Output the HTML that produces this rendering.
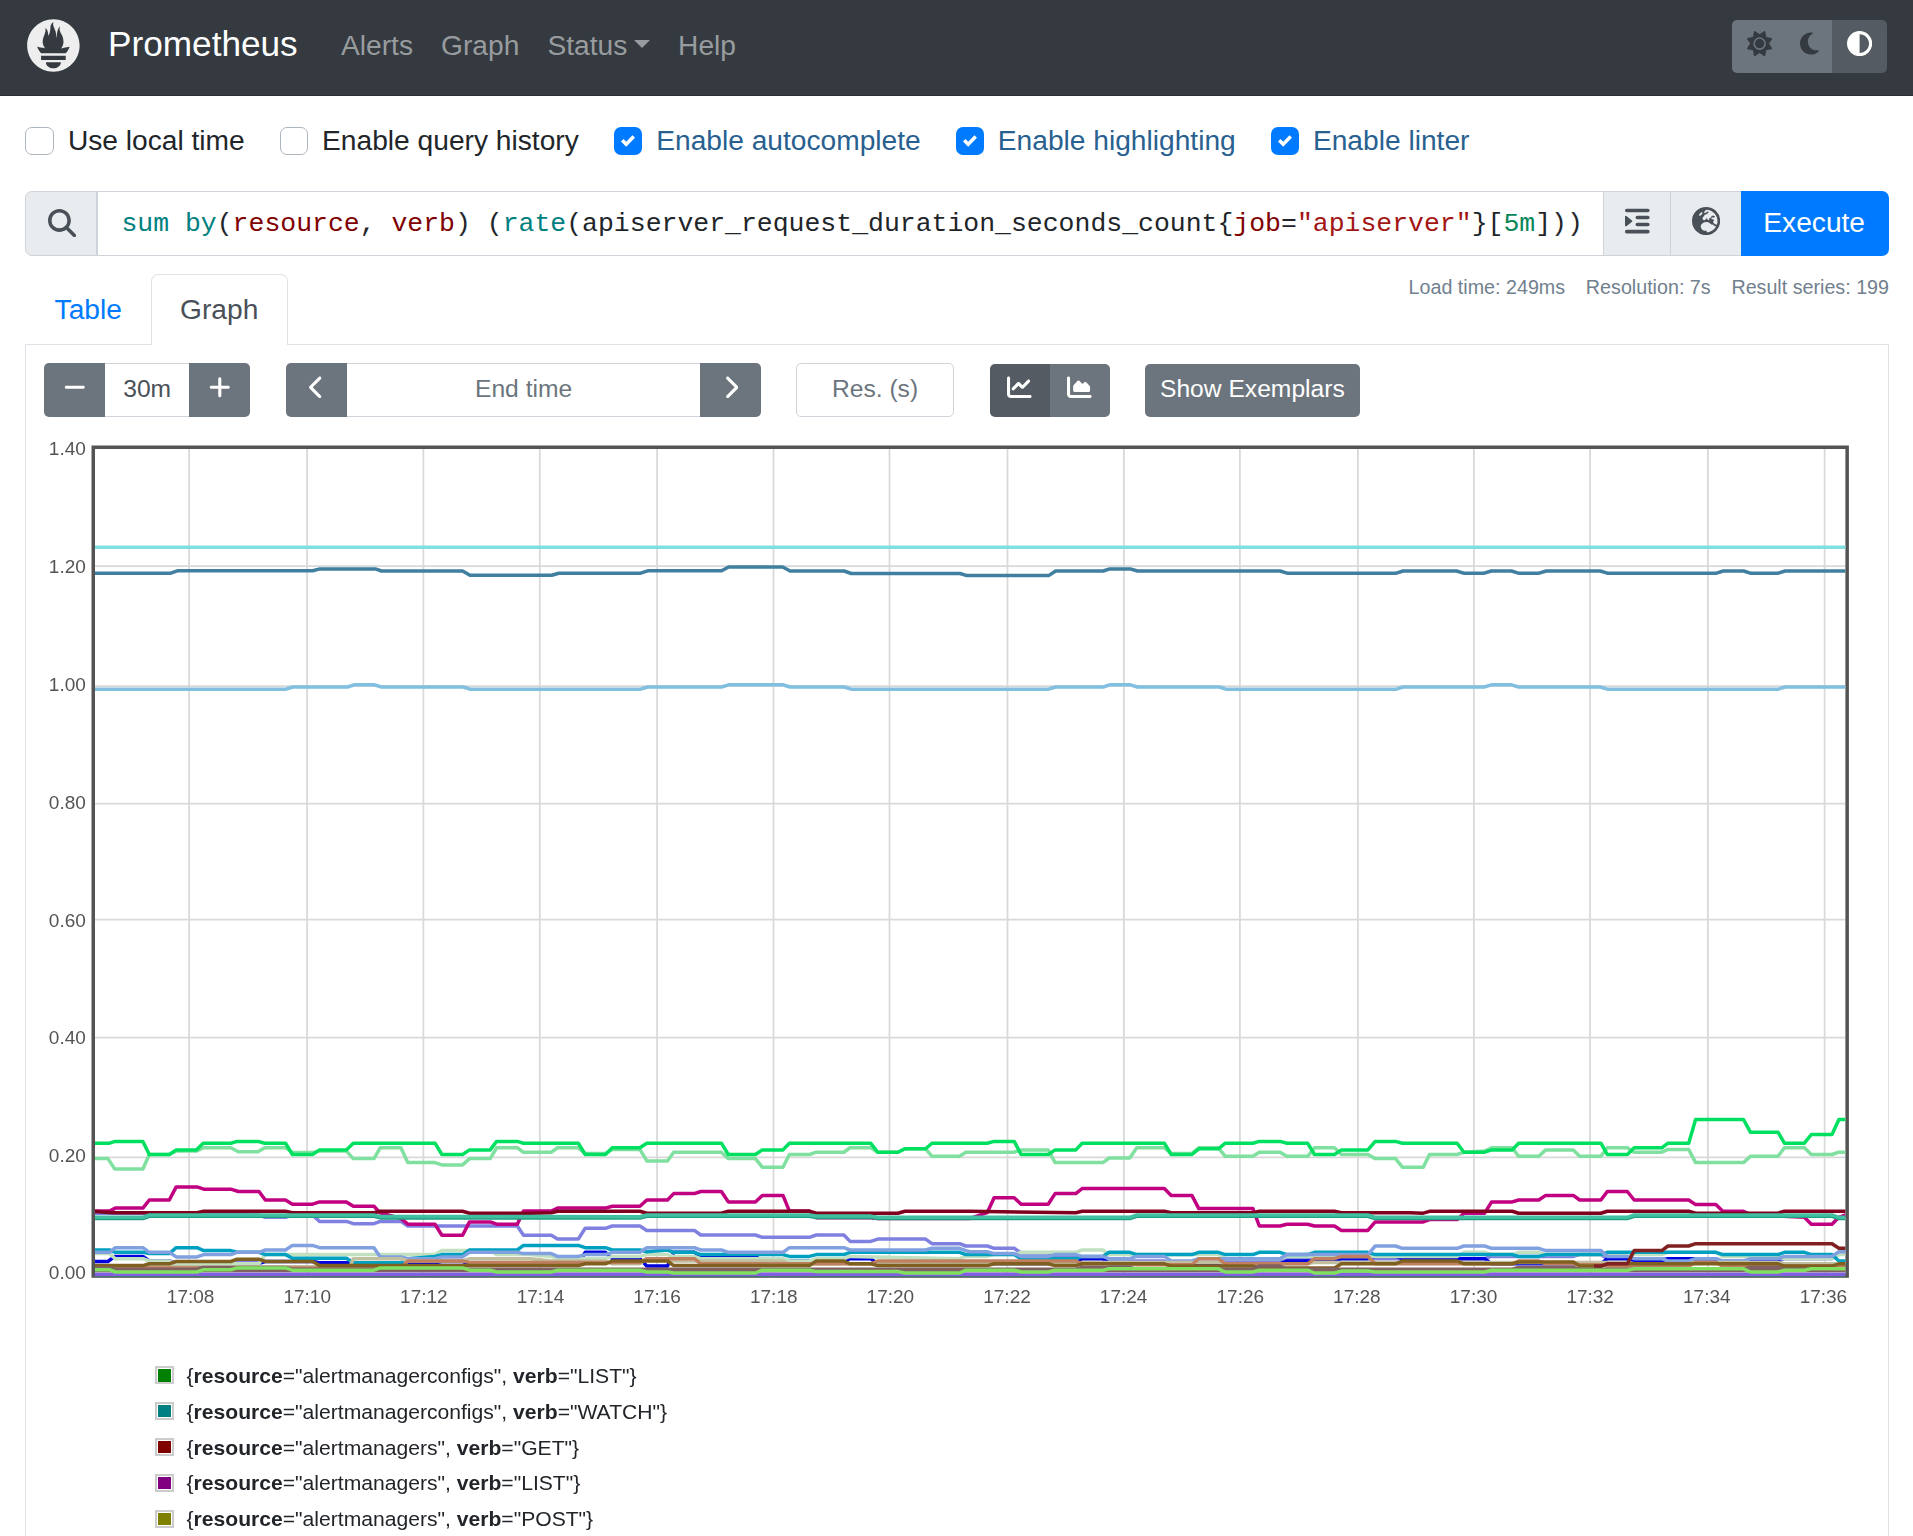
<!DOCTYPE html>
<html><head><meta charset="utf-8"><title>Prometheus Time Series Collection and Processing Server</title>
<style>
html,body{margin:0;padding:0;background:#fff}
body{width:1913px;height:1536px;overflow:hidden;position:relative;font-family:"Liberation Sans", sans-serif;color:#212529}
.a{position:absolute;box-sizing:border-box}
.t{position:absolute;white-space:pre;line-height:1}
.mono{font-family:"Liberation Mono", monospace}
b{font-weight:700}
</style></head><body>

<div class="a" style="left:0.00px;top:0.00px;width:1913.00px;height:96.00px;background:#343a40"></div>
<div class="a" style="left:0.00px;top:95.00px;width:1913.00px;height:1.00px;background:#2a2e35"></div>
<svg class="a" style="left:27.00px;top:19.10px" width="52.80" height="52.80" viewBox="0 0.3 113.333 114"><path fill="#eeeeee" d="M56.667,0.667C25.372,0.667,0,26.036,0,57.332c0,31.295,25.372,56.666,56.667,56.666s56.666-25.371,56.666-56.666C113.333,26.036,87.961,0.667,56.667,0.667z M56.667,106.722c-8.904,0-16.123-5.948-16.123-13.283H72.79C72.79,100.773,65.571,106.722,56.667,106.722z M83.297,89.04H30.034v-9.658h53.264V89.04z M83.106,74.411H30.186c-0.176-0.203-0.356-0.403-0.526-0.609c-5.452-6.62-6.736-10.076-7.983-13.598c-0.021-0.116,6.611,1.355,11.314,2.413c0,0,2.42,0.56,5.958,1.205c-3.397-3.982-5.414-9.044-5.414-14.218c0-11.359,8.712-21.285,5.569-29.308c3.059,0.249,6.331,6.456,6.552,16.161c3.252-4.494,4.613-12.701,4.613-17.733c0-5.21,3.433-11.262,6.867-11.469c-3.061,5.045,0.793,9.37,4.219,20.099c1.285,4.03,1.121,10.812,2.113,15.113C63.797,33.534,65.333,20.5,71,16c-2.5,5.667,0.37,12.758,2.333,16.167c3.167,5.5,5.087,9.667,5.087,17.548c0,5.284-1.951,10.259-5.242,14.148c3.742-0.702,6.326-1.335,6.326-1.335l12.152-2.371C91.657,60.156,89.891,67.418,83.106,74.411z"/></svg>
<div class="t " style="left:108.00px;top:26.30px;font-size:35.20px;color:#ffffff;">Prometheus</div>
<div class="t " style="left:341.00px;top:32.26px;font-size:28.16px;color:#999c9f;">Alerts</div>
<div class="t " style="left:441.10px;top:32.26px;font-size:28.16px;color:#999c9f;">Graph</div>
<div class="t " style="left:547.50px;top:32.26px;font-size:28.16px;color:#999c9f;">Status</div>
<div class="a" style="left:633.8px;top:39.7px;width:0;height:0;border-top:8.4px solid #999c9f;border-left:8.4px solid transparent;border-right:8.4px solid transparent"></div>
<div class="t " style="left:678.10px;top:32.26px;font-size:28.16px;color:#999c9f;">Help</div>
<div class="a" style="left:1732.00px;top:20.00px;width:101.00px;height:53.00px;background:#6c757d;border-radius:5px 0 0 5px"></div>
<div class="a" style="left:1832.00px;top:20.00px;width:55.00px;height:53.00px;background:#545b62;border-radius:0 5px 5px 0"></div>
<svg class="a" style="left:1746.90px;top:30.90px" width="25.20" height="25.20" viewBox="0 0 512 512"><path fill="#343a40" d="M361.500 1.200c5 2.100 8.600 6.600 9.600 11.900L391 121l107.900 19.800c5.300 1 9.800 4.600 11.900 9.600s1.500 10.700-1.600 15.200L446.900 256l62.300 90.300c3.100 4.500 3.700 10.200 1.600 15.200s-6.600 8.600-11.900 9.600L391 391 371.100 498.900c-1 5.300-4.600 9.800-9.600 11.900s-10.700 1.500-15.200-1.600L256 446.900l-90.300 62.300c-4.500 3.100-10.200 3.700-15.200 1.600s-8.600-6.600-9.600-11.900L121 391 13.100 371.100c-5.300-1-9.800-4.600-11.900-9.600s-1.500-10.700 1.600-15.200L65.100 256 2.800 165.700c-3.100-4.500-3.700-10.200-1.600-15.200s6.600-8.600 11.900-9.600L121 121 140.900 13.100c1-5.300 4.600-9.800 9.600-11.900s10.700-1.500 15.200 1.600L256 65.100 346.300 2.800c4.500-3.100 10.200-3.700 15.200-1.600zM160 256a96 96 0 1 1 192 0 96 96 0 1 1 -192 0zm224 0a128 128 0 1 0 -256 0 128 128 0 1 0 256 0z"/></svg>
<svg class="a" style="left:1800.20px;top:30.80px" width="18.90" height="25.20" viewBox="0 0 384 512"><path fill="#343a40" d="M223.500 32C100 32 0 132.300 0 256S100 480 223.500 480c60.600 0 115.500-24.200 155.800-63.400c5-4.900 6.300-12.500 3.100-18.700s-10.100-9.700-17-8.500c-9.800 1.700-19.800 2.600-30.100 2.600c-96.900 0-175.500-78.800-175.500-176c0-65.800 36-123.100 89.300-153.300c6.100-3.500 9.200-10.500 7.700-17.300s-7.300-11.900-14.300-12.500c-6.300-.5-12.600-.8-19-.8z"/></svg>
<svg class="a" style="left:1846.90px;top:30.80px" width="25.20" height="25.20" viewBox="0 0 512 512"><path fill="#ffffff" d="M448 256c0-106-86-192-192-192V448c106 0 192-86 192-192zM0 256a256 256 0 1 1 512 0A256 256 0 1 1 0 256z"/></svg>
<div class="a" style="left:25.00px;top:127.00px;width:29.00px;height:28.00px;background:#fff;border:1px solid #adb5bd;border-radius:7px"></div>
<div class="t " style="left:67.90px;top:126.76px;font-size:28.16px;color:#212529;">Use local time</div>
<div class="a" style="left:280.00px;top:127.00px;width:28.00px;height:28.00px;background:#fff;border:1px solid #adb5bd;border-radius:7px"></div>
<div class="t " style="left:322.10px;top:126.76px;font-size:28.16px;color:#212529;">Enable query history</div>
<div class="a" style="left:614.00px;top:127.00px;width:28.00px;height:28.00px;background:#007bff;border-radius:7px"></div>
<svg class="a" style="left:621.00px;top:134.00px" width="14.00" height="14.00" viewBox="0 0 8 8"><path fill="#fff" d="M6.564.75l-3.590 3.612-1.538-1.550L0 4.260l2.974 2.990L8 2.193z"/></svg>
<div class="t " style="left:656.20px;top:126.76px;font-size:28.16px;color:#286090;">Enable autocomplete</div>
<div class="a" style="left:955.60px;top:127.00px;width:28.00px;height:28.00px;background:#007bff;border-radius:7px"></div>
<svg class="a" style="left:962.60px;top:134.00px" width="14.00" height="14.00" viewBox="0 0 8 8"><path fill="#fff" d="M6.564.75l-3.590 3.612-1.538-1.550L0 4.260l2.974 2.990L8 2.193z"/></svg>
<div class="t " style="left:997.80px;top:126.76px;font-size:28.16px;color:#286090;">Enable highlighting</div>
<div class="a" style="left:1271.00px;top:127.00px;width:28.00px;height:28.00px;background:#007bff;border-radius:7px"></div>
<svg class="a" style="left:1278.00px;top:134.00px" width="14.00" height="14.00" viewBox="0 0 8 8"><path fill="#fff" d="M6.564.75l-3.590 3.612-1.538-1.550L0 4.260l2.974 2.990L8 2.193z"/></svg>
<div class="t " style="left:1312.90px;top:126.76px;font-size:28.16px;color:#286090;">Enable linter</div>
<div class="a" style="left:25.00px;top:191.00px;width:72.00px;height:65.00px;background:#e9ecef;border:1px solid #ced4da;border-radius:7px 0 0 7px"></div>
<div class="a" style="left:96.00px;top:191.00px;width:1508.00px;height:65.00px;background:#fff;border:1px solid #ced4da;border-left-width:2px"></div>
<div class="a" style="left:1603.00px;top:191.00px;width:68.00px;height:65.00px;background:#e9ecef;border:1px solid #ced4da"></div>
<div class="a" style="left:1670.00px;top:191.00px;width:72.00px;height:65.00px;background:#e9ecef;border:1px solid #ced4da"></div>
<div class="a" style="left:1741.00px;top:191.00px;width:148.00px;height:65.00px;background:#007bff;border-radius:0 7px 7px 0"></div>
<div class="t " style="left:1763.30px;top:208.76px;font-size:28.16px;color:#fff;">Execute</div>
<svg class="a" style="left:48.20px;top:208.90px" width="28.16" height="28.16" viewBox="0 0 512 512"><path fill="#495057" d="M416 208c0 45.900-14.900 88.300-40 122.700L502.600 457.400c12.500 12.500 12.500 32.800 0 45.300s-32.800 12.500-45.300 0L330.700 376c-34.400 25.200-76.800 40-122.700 40C93.100 416 0 322.900 0 208S93.100 0 208 0S416 93.100 416 208zM208 352a144 144 0 1 0 0-288 144 144 0 1 0 0 288z"/></svg>
<svg class="a" style="left:1625.10px;top:207.40px" width="24.64" height="28.16" viewBox="0 0 448 512"><path fill="#495057" d="M0 64C0 46.300 14.300 32 32 32H416c17.700 0 32 14.300 32 32s-14.300 32-32 32H32C14.300 96 0 81.700 0 64zM192 192c0-17.700 14.300-32 32-32H416c17.700 0 32 14.300 32 32s-14.300 32-32 32H224c-17.700 0-32-14.300-32-32zm32 96H416c17.700 0 32 14.300 32 32s-14.300 32-32 32H224c-17.700 0-32-14.300-32-32s14.300-32 32-32zM0 448c0-17.700 14.300-32 32-32H416c17.700 0 32 14.300 32 32s-14.300 32-32 32H32c-17.700 0-32-14.300-32-32zM127.800 268.600L25.800 347.900C15.300 356.100 0 348.600 0 335.300V176.700c0-13.300 15.300-20.800 25.800-12.600l101.900 79.300c8.200 6.400 8.200 18.900 0 25.300z"/></svg>
<svg class="a" style="left:1691.90px;top:207.30px" width="28.16" height="28.16" viewBox="0 0 512 512"><path fill="#495057" d="M266.300 48.300L232.500 73.600c-5.400 4-8.500 10.400-8.500 17.100v9.100c0 6.800 5.500 12.300 12.300 12.300c2.400 0 4.800-.7 6.800-2.100l41.800-27.900c2-1.300 4.400-2.100 6.800-2.100h1c6.200 0 11.300 5.100 11.300 11.300c0 3-1.200 5.900-3.300 8l-19.900 19.900c-5.800 5.800-12.900 10.200-20.700 12.800l-26.500 8.800c-5.800 1.900-9.600 7.300-9.600 13.400c0 3.700-1.500 7.300-4.100 10l-17.900 17.900c-6.400 6.400-9.900 15-9.900 24v4.300c0 16.400 13.600 29.700 29.900 29.700c11 0 21.200-6.200 26.100-16l4-8.100c2.400-4.800 7.400-7.900 12.800-7.900c4.500 0 8.700 2.100 11.400 5.700l16.300 21.700c2.100 2.900 5.500 4.500 9.100 4.500c8.400 0 13.900-8.900 10.100-16.400l-1.100-2.300c-3.500-7 0-15.500 7.500-18l21.200-7.100c7.600-2.500 12.700-9.600 12.700-17.600c0-10.300 8.300-18.600 18.600-18.600H400c8.800 0 16 7.200 16 16s-7.200 16-16 16H379.300c-7.200 0-14.200 2.900-19.300 8l-4.700 4.700c-2.100 2.100-3.300 5-3.300 8c0 6.200 5.100 11.300 11.300 11.300h11.300c6 0 11.800 2.400 16 6.600l6.500 6.500c1.800 1.800 2.800 4.300 2.800 6.800s-1 5-2.800 6.800l-7.500 7.500C386 262 384 266.900 384 272s2 10 5.700 13.700L408 304c10.200 10.200 24.100 16 38.600 16H454c6.500-20.200 10-41.700 10-64c0-111.400-87.600-202.400-197.700-207.700zm172 307.900c-3.700-2.600-8.200-4.100-13-4.100c-6 0-11.800-2.400-16-6.600L396 332c-7.700-7.700-18-12-28.900-12c-9.700 0-19.200-3.500-26.600-9.800L314 287.400c-11.600-9.900-26.400-15.400-41.700-15.400H251.400c-12.600 0-25 3.700-35.500 10.700L188.500 301c-17.800 11.900-28.500 31.900-28.500 53.300v3.200c0 17 6.700 33.300 18.700 45.300l16 16c8.500 8.500 20 13.300 32 13.300H248c13.300 0 24 10.700 24 24c0 2.500 .4 5 1.100 7.300c71.300-5.700 132.500-47.600 165.200-107.200zM0 256a256 256 0 1 1 512 0A256 256 0 1 1 0 256zM187.300 100.700c-6.200-6.200-16.400-6.200-22.600 0l-32 32c-6.200 6.200-6.200 16.400 0 22.600s16.400 6.200 22.600 0l32-32c6.200-6.200 6.200-16.400 0-22.600z"/></svg>
<div class="t mono" id="q" style="left:121.4px;top:211.38px;font-size:26.485px;color:#212529"><span style="color:#008080">sum</span> <span style="color:#008080">by</span>(<span style="color:#800000">resource</span>, <span style="color:#800000">verb</span>) (<span style="color:#008080">rate</span>(apiserver_request_duration_seconds_count{<span style="color:#800000">job</span>=<span style="color:#a31515">"apiserver"</span>}[<span style="color:#098658">5m</span>]))</div>
<div class="t " style="right:24.00px;top:277.92px;font-size:19.71px;color:#71808e;">Load time: 249ms &ensp; Resolution: 7s &ensp; Result series: 199</div>
<div class="a" style="left:25.00px;top:344.00px;width:1864.00px;height:1256.00px;border:1px solid #dee2e6;border-bottom:0"></div>
<div class="a" style="left:151.00px;top:274.00px;width:137.00px;height:71.30px;background:#fff;border:1px solid #dee2e6;border-bottom:0;border-radius:7px 7px 0 0"></div>
<div class="t " style="left:54.60px;top:295.96px;font-size:28.16px;color:#007bff;">Table</div>
<div class="t " style="left:180.10px;top:295.96px;font-size:28.16px;color:#495057;">Graph</div>
<div class="a" style="left:44.20px;top:363.00px;width:60.80px;height:53.70px;background:#6c757d;border-radius:5px 0 0 5px"></div>
<div class="a" style="left:104.70px;top:363.00px;width:84.60px;height:53.70px;background:#fff;border-top:1px solid #ced4da;border-bottom:1px solid #ced4da"></div>
<div class="a" style="left:189.00px;top:363.00px;width:61.00px;height:53.70px;background:#6c757d;border-radius:0 5px 5px 0"></div>
<div class="t " style="left:147.20px;transform:translateX(-50%);top:376.94px;font-size:24.64px;color:#495057;">30m</div>
<div class="a" style="left:286.00px;top:363.00px;width:61.00px;height:53.70px;background:#6c757d;border-radius:5px 0 0 5px"></div>
<div class="a" style="left:346.70px;top:363.00px;width:354.00px;height:53.70px;background:#fff;border-top:1px solid #ced4da;border-bottom:1px solid #ced4da"></div>
<div class="a" style="left:700.40px;top:363.00px;width:60.40px;height:53.70px;background:#6c757d;border-radius:0 5px 5px 0"></div>
<div class="t " style="left:523.60px;transform:translateX(-50%);top:376.94px;font-size:24.64px;color:#6c757d;">End time</div>
<div class="a" style="left:796.10px;top:363.00px;width:157.80px;height:53.70px;background:#fff;border:1px solid #ced4da;border-radius:5px"></div>
<div class="t " style="left:875.00px;transform:translateX(-50%);top:376.94px;font-size:24.64px;color:#6c757d;">Res. (s)</div>
<div class="a" style="left:990.00px;top:363.80px;width:60.50px;height:52.90px;background:#545b62;border-radius:5px 0 0 5px"></div>
<div class="a" style="left:1050.00px;top:363.80px;width:60.00px;height:52.90px;background:#6c757d;border-radius:0 5px 5px 0"></div>
<div class="a" style="left:1145.00px;top:363.80px;width:215.00px;height:52.90px;background:#6c757d;border-radius:5px"></div>
<div class="t " style="left:1160.00px;top:377.34px;font-size:24.64px;color:#fff;">Show Exemplars</div>
<svg class="a" style="left:63.70px;top:374.70px" width="21.56" height="24.64" viewBox="0 0 448 512"><path fill="#fff" d="M432 256c0 17.700-14.300 32-32 32L48 288c-17.700 0-32-14.300-32-32s14.300-32 32-32l352 0c17.700 0 32 14.300 32 32z"/></svg>
<svg class="a" style="left:208.70px;top:374.70px" width="21.56" height="24.64" viewBox="0 0 448 512"><path fill="#fff" d="M256 80c0-17.700-14.300-32-32-32s-32 14.300-32 32V224H48c-17.700 0-32 14.300-32 32s14.300 32 32 32H192V432c0 17.700 14.300 32 32 32s32-14.300 32-32V288H400c17.700 0 32-14.300 32-32s-14.300-32-32-32H256V80z"/></svg>
<svg class="a" style="left:308.80px;top:374.70px" width="15.40" height="24.64" viewBox="0 0 320 512"><path fill="#fff" d="M9.400 233.400c-12.500 12.500-12.500 32.800 0 45.300l192 192c12.500 12.500 32.800 12.500 45.300 0s12.500-32.800 0-45.300L77.300 256 246.600 86.600c12.500-12.500 12.500-32.800 0-45.300s-32.800-12.500-45.300 0l-192 192z"/></svg>
<svg class="a" style="left:722.90px;top:374.70px" width="15.40" height="24.64" viewBox="0 0 320 512"><path fill="#fff" d="M310.600 233.400c12.500 12.500 12.500 32.800 0 45.300l-192 192c-12.500 12.500-32.800 12.500-45.300 0s-12.500-32.800 0-45.300L242.700 256 73.400 86.600c-12.500-12.500-12.500-32.800 0-45.300s32.800-12.500 45.300 0l192 192z"/></svg>
<svg class="a" style="left:1007.40px;top:374.90px" width="24.64" height="24.64" viewBox="0 0 512 512"><path fill="#fff" d="M64 64c0-17.700-14.300-32-32-32S0 46.300 0 64V400c0 44.200 35.800 80 80 80H480c17.700 0 32-14.300 32-32s-14.300-32-32-32H80c-8.800 0-16-7.200-16-16V64zm406.600 86.600c12.500-12.500 12.500-32.800 0-45.300s-32.800-12.500-45.300 0L320 210.700l-57.400-57.400c-12.500-12.500-32.800-12.500-45.300 0l-112 112c-12.500 12.500-12.500 32.800 0 45.300s32.800 12.500 45.300 0L240 221.300l57.400 57.400c12.500 12.500 32.800 12.500 45.300 0l128-128z"/></svg>
<svg class="a" style="left:1067.10px;top:374.90px" width="24.64" height="24.64" viewBox="0 0 512 512"><path fill="#fff" d="M64 64c0-17.700-14.300-32-32-32S0 46.300 0 64V400c0 44.200 35.800 80 80 80H480c17.700 0 32-14.300 32-32s-14.300-32-32-32H80c-8.800 0-16-7.200-16-16V64zm96 288H448c17.700 0 32-14.300 32-32V251.800c0-7.600-2.700-15-7.700-20.800l-65.800-76.800c-12.100-14.200-33.700-15-46.900-1.800l-21 21c-10 10-26.400 9.200-35.400-1.600l-39.200-47c-12.600-15.100-35.700-15.400-48.700-.6L135.900 215c-5.100 5.800-7.900 13.300-7.900 21.100v84c0 17.700 14.300 32 32 32z"/></svg>
<svg class="a" style="left:0;top:430px" width="1913" height="860" viewBox="0 430 1913 860">
<path d="M95.0 566.00 H1845.4 M95.0 686.00 H1845.4 M95.0 803.60 H1845.4 M95.0 919.60 H1845.4 M95.0 1037.70 H1845.4 M95.0 1157.40 H1845.4 M189.10 449.0 V1274.3 M307.10 449.0 V1274.3 M423.40 449.0 V1274.3 M539.80 449.0 V1274.3 M657.10 449.0 V1274.3 M773.50 449.0 V1274.3 M889.50 449.0 V1274.3 M1007.50 449.0 V1274.3 M1123.90 449.0 V1274.3 M1239.90 449.0 V1274.3 M1357.90 449.0 V1274.3 M1473.90 449.0 V1274.3 M1590.00 449.0 V1274.3 M1707.90 449.0 V1274.3 M1824.60 449.0 V1274.3" stroke="#d9d9d9" stroke-width="1.75" fill="none"/>
<rect x="93.25" y="447.25" width="1753.90" height="828.80" fill="none" stroke="#545454" stroke-width="3.5"/>
<g fill="none" stroke-width="3.5" stroke-linejoin="round" stroke-linecap="butt">
<path stroke="#408080" d="M95.0 1274.9 H1845.4"/>
<path stroke="#8060e0" d="M95.0 1274.3 H1845.4"/>
<path stroke="#80e0e0" d="M95.0 547.2 L1845.4 547.2"/>
<path stroke="#80bfe0" d="M95.0 689.2 L285.9 689.2 L293.0 687.0 L347.6 687.0 L354.3 684.8 L374.4 684.8 L381.5 687.0 L463.2 687.0 L470.0 689.2 L640.6 689.2 L647.7 687.0 L721.6 687.0 L728.7 684.8 L782.7 684.8 L790.1 687.0 L844.1 687.0 L851.2 689.2 L1048.6 689.2 L1055.7 687.0 L1103.2 687.0 L1109.7 684.8 L1130.3 684.8 L1137.4 687.0 L1219.2 687.0 L1226.0 689.2 L1396.3 689.2 L1403.1 687.0 L1484.2 687.0 L1491.3 684.8 L1511.4 684.8 L1518.5 687.0 L1600.2 687.0 L1607.3 689.2 L1778.2 689.2 L1785.0 687.0 L1845.4 687.0"/>
<path stroke="#407fa0" d="M95.0 573.2 L170.8 573.2 L178.0 570.7 L312.7 570.7 L319.8 568.9 L375.3 568.9 L381.5 571.0 L462.6 571.0 L470.0 575.3 L551.7 575.3 L558.8 573.2 L640.6 573.2 L647.7 570.8 L721.6 570.8 L728.7 567.0 L782.7 567.0 L790.1 571.0 L844.1 571.0 L851.2 573.5 L960.0 573.5 L966.9 575.6 L1048.6 575.6 L1055.7 571.0 L1103.2 571.0 L1109.7 568.9 L1130.3 568.9 L1137.4 571.0 L1280.0 571.0 L1287.1 573.2 L1396.3 573.2 L1403.1 571.0 L1456.5 571.0 L1463.6 573.2 L1484.2 573.2 L1491.3 571.0 L1511.4 571.0 L1518.5 573.2 L1539.1 573.2 L1546.2 571.0 L1600.2 571.0 L1607.3 573.2 L1716.5 573.2 L1723.3 571.0 L1743.6 571.0 L1750.4 573.2 L1778.2 573.2 L1785.0 571.0 L1845.4 571.0"/>
<path stroke="#80e0a0" d="M95.0 1158.6 L107.9 1158.6 L114.8 1169.0 L142.9 1169.0 L149.3 1154.5 L169.3 1154.5 L176.2 1151.1 L196.3 1151.1 L203.2 1147.8 L230.8 1147.8 L238.3 1151.7 L257.9 1151.7 L264.8 1147.8 L285.5 1147.8 L292.4 1152.4 L312.6 1152.4 L319.5 1151.1 L346.4 1151.1 L353.3 1158.6 L374.0 1158.6 L380.2 1147.8 L400.9 1147.8 L407.8 1162.6 L435.0 1162.6 L441.9 1164.9 L462.6 1164.9 L469.5 1158.6 L490.2 1158.6 L496.6 1147.8 L517.3 1147.8 L523.5 1152.2 L530.0 1152.2 L551.2 1152.2 L557.6 1147.8 L578.3 1147.8 L585.2 1153.4 L605.4 1153.4 L612.3 1149.4 L639.9 1149.4 L646.8 1160.9 L667.5 1160.9 L673.7 1152.2 L721.4 1152.2 L728.3 1158.6 L755.4 1158.6 L762.3 1167.2 L783.0 1167.2 L789.4 1154.5 L809.4 1154.5 L816.3 1152.2 L843.9 1152.2 L850.1 1147.8 L870.8 1147.8 L877.7 1152.2 L898.0 1152.2 L904.9 1148.8 L925.6 1148.8 L932.0 1156.3 L959.6 1156.3 L965.8 1152.2 L970.0 1152.2 L1014.2 1152.2 L1021.1 1149.9 L1048.2 1149.9 L1055.1 1162.6 L1102.9 1162.6 L1109.1 1158.0 L1129.8 1158.0 L1136.7 1147.8 L1164.3 1147.8 L1171.2 1153.4 L1191.9 1153.4 L1198.8 1147.8 L1218.4 1147.8 L1225.3 1156.3 L1252.9 1156.3 L1259.3 1152.2 L1280.0 1152.2 L1286.9 1156.3 L1307.6 1156.3 L1314.5 1147.8 L1334.5 1147.8 L1341.4 1154.5 L1367.9 1154.5 L1375.2 1158.6 L1395.5 1158.6 L1402.4 1167.2 L1410.0 1167.2 L1423.3 1167.2 L1429.5 1154.5 L1457.1 1154.5 L1464.0 1152.2 L1484.7 1151.1 L1491.6 1147.8 L1512.3 1147.8 L1518.6 1156.3 L1538.8 1156.3 L1545.7 1149.9 L1573.3 1149.9 L1579.7 1156.3 L1600.9 1156.3 L1607.3 1147.8 L1627.3 1147.8 L1634.2 1152.2 L1661.8 1152.2 L1668.0 1149.4 L1688.7 1149.4 L1695.6 1162.6 L1743.5 1162.6 L1750.4 1156.3 L1778.0 1156.3 L1784.4 1147.8 L1804.4 1147.8 L1811.3 1154.5 L1832.0 1154.5 L1838.9 1152.2 L1845.4 1152.2 L1845.4 1152.2"/>
<path stroke="#00e060" d="M95.0 1143.2 L109.5 1143.2 L115.3 1141.4 L142.9 1141.4 L149.3 1154.5 L169.3 1154.5 L176.2 1149.9 L196.3 1149.9 L203.2 1143.2 L230.8 1143.2 L237.2 1141.4 L257.9 1141.4 L264.8 1143.2 L285.5 1143.2 L292.4 1154.5 L312.6 1154.5 L319.5 1149.9 L346.4 1149.9 L353.3 1143.2 L435.0 1143.2 L441.9 1154.5 L462.6 1154.5 L469.5 1149.9 L490.2 1149.9 L496.6 1141.4 L517.3 1141.4 L523.5 1143.2 L530.0 1143.2 L578.3 1143.2 L585.2 1154.5 L605.4 1154.5 L612.3 1147.8 L639.9 1147.8 L646.8 1143.2 L721.4 1143.2 L728.3 1154.5 L755.4 1154.5 L762.3 1149.9 L783.0 1149.9 L789.4 1143.2 L870.8 1143.2 L877.7 1152.2 L898.0 1152.2 L904.9 1148.8 L925.6 1148.8 L932.0 1143.2 L970.0 1143.2 L987.2 1143.2 L994.1 1141.4 L1014.2 1141.4 L1021.1 1154.5 L1048.2 1154.5 L1055.1 1149.9 L1075.8 1149.9 L1082.2 1143.2 L1164.3 1143.2 L1171.2 1154.5 L1191.9 1154.5 L1198.8 1148.8 L1218.4 1148.8 L1225.3 1143.2 L1252.9 1143.2 L1259.3 1141.4 L1280.0 1141.4 L1286.9 1143.2 L1307.6 1143.2 L1314.5 1154.5 L1334.5 1154.5 L1341.4 1149.9 L1367.9 1149.9 L1375.2 1141.4 L1395.5 1141.4 L1402.4 1143.2 L1410.0 1143.2 L1457.1 1143.2 L1464.0 1152.2 L1484.7 1152.2 L1491.6 1149.9 L1512.3 1149.9 L1518.6 1143.2 L1600.9 1143.2 L1607.3 1154.5 L1627.3 1154.5 L1634.2 1147.8 L1661.8 1147.8 L1668.0 1143.2 L1688.7 1143.2 L1695.6 1119.5 L1743.5 1119.5 L1750.4 1132.2 L1778.0 1132.2 L1784.4 1143.2 L1804.4 1143.2 L1811.3 1134.5 L1832.0 1134.5 L1838.9 1119.5 L1845.4 1119.5 L1845.4 1119.5"/>
<path stroke="#8080e0" d="M95.0 1213.2 L169.3 1213.2 L259.0 1215.0 L265.3 1217.3 L285.5 1217.3 L292.4 1215.0 L312.6 1215.0 L319.5 1221.4 L346.4 1221.4 L353.3 1223.7 L374.0 1223.7 L380.2 1221.4 L400.9 1221.4 L407.8 1226.0 L517.3 1226.0 L523.5 1235.2 L530.0 1235.2 L551.2 1235.2 L557.6 1239.1 L578.3 1239.1 L585.2 1228.3 L605.4 1228.3 L612.3 1226.0 L639.9 1226.0 L646.8 1230.4 L694.4 1230.4 L700.7 1235.0 L755.4 1235.0 L762.3 1237.3 L809.4 1237.3 L816.3 1235.0 L843.9 1235.0 L850.1 1241.4 L870.8 1241.4 L877.7 1239.1 L925.6 1239.1 L932.0 1243.7 L959.6 1243.7 L965.8 1246.0 L970.0 1246.0 L987.2 1246.0 L994.1 1248.3 L1014.2 1248.3 L1021.1 1252.9 L1048.2 1252.9 L1055.1 1256.4 L1075.8 1256.4 L1082.2 1258.7 L1102.9 1258.7 L1109.1 1261.0 L1164.3 1261.0 L1171.2 1263.8 L1218.4 1263.8 L1225.3 1261.0 L1280.0 1261.0 L1286.9 1258.7 L1410.0 1258.7 L1484.7 1258.7 L1491.6 1256.4 L1573.3 1256.4 L1579.7 1254.6 L1600.9 1254.6 L1607.3 1258.7 L1688.7 1258.7 L1695.6 1261.0 L1778.0 1261.0 L1784.4 1258.7 L1832.0 1258.7 L1838.9 1253.6 L1845.4 1253.6 L1845.4 1253.6"/>
<path stroke="#c00080" d="M95.0 1211.1 L109.5 1211.1 L115.3 1208.1 L142.9 1208.1 L149.3 1200.0 L169.3 1200.0 L176.2 1186.9 L196.9 1186.9 L203.8 1189.2 L230.8 1189.2 L238.3 1191.5 L259.0 1191.5 L265.3 1200.0 L285.5 1200.0 L292.4 1204.2 L312.6 1204.2 L319.5 1201.9 L346.4 1201.9 L353.3 1206.3 L374.0 1206.3 L379.8 1212.7 L400.9 1218.4 L407.8 1224.2 L435.0 1224.2 L441.9 1235.2 L462.6 1235.2 L469.5 1221.9 L490.2 1221.9 L496.6 1224.2 L517.3 1224.2 L523.5 1211.1 L530.0 1211.1 L551.2 1211.1 L557.6 1208.1 L605.4 1208.1 L612.3 1206.3 L639.9 1206.3 L646.8 1200.0 L667.5 1200.0 L673.7 1193.6 L694.4 1193.6 L700.7 1191.5 L721.4 1191.5 L728.3 1201.9 L755.4 1201.9 L762.3 1195.4 L783.0 1195.4 L789.4 1211.1 L809.4 1211.1 L816.3 1217.8 L870.8 1217.8 L877.7 1218.4 L970.0 1218.4 L987.2 1212.7 L994.1 1197.7 L1014.2 1197.7 L1021.1 1204.2 L1048.2 1204.2 L1055.1 1193.6 L1075.8 1193.6 L1082.2 1188.5 L1164.3 1188.5 L1171.2 1195.4 L1191.9 1195.4 L1198.8 1208.6 L1252.9 1208.6 L1259.3 1226.0 L1280.0 1226.0 L1286.9 1224.2 L1307.6 1224.2 L1314.5 1226.0 L1334.5 1226.0 L1341.4 1230.4 L1367.9 1230.4 L1375.2 1221.9 L1410.0 1221.9 L1423.3 1221.9 L1429.5 1219.6 L1457.1 1219.6 L1464.0 1213.2 L1484.7 1213.2 L1491.6 1201.9 L1512.3 1201.9 L1518.6 1200.0 L1538.8 1200.0 L1545.7 1195.4 L1573.3 1195.4 L1579.7 1200.0 L1600.9 1200.0 L1607.3 1191.5 L1627.3 1191.5 L1634.2 1200.0 L1688.7 1200.0 L1695.6 1204.6 L1715.9 1204.6 L1722.8 1211.3 L1743.5 1211.3 L1750.4 1214.5 L1804.4 1217.3 L1811.3 1224.2 L1832.0 1224.2 L1838.9 1217.3 L1845.4 1215.0 L1845.4 1215.0"/>
<path stroke="#800020" d="M95.0 1211.5 L113.0 1212.7 L196.9 1212.7 L203.8 1211.3 L285.5 1211.3 L292.4 1212.7 L374.0 1212.7 L380.2 1211.3 L462.6 1211.3 L469.5 1213.2 L530.0 1213.2 L551.2 1212.7 L557.6 1211.3 L639.9 1211.3 L646.8 1213.2 L721.4 1213.2 L728.3 1211.3 L809.4 1211.3 L816.3 1213.2 L898.0 1213.2 L904.9 1211.3 L970.0 1211.3 L1075.8 1212.7 L1082.2 1211.3 L1164.3 1211.3 L1171.2 1212.7 L1252.9 1212.7 L1259.3 1211.3 L1334.5 1211.3 L1341.4 1212.7 L1410.0 1212.7 L1423.3 1213.2 L1429.5 1211.3 L1512.3 1211.3 L1518.6 1213.2 L1600.9 1213.2 L1607.3 1211.3 L1688.7 1211.3 L1695.6 1213.2 L1778.0 1213.2 L1784.4 1211.3 L1845.4 1211.3 L1845.4 1211.3"/>
<path stroke="#20a080" d="M95.0 1218.6 L142.9 1218.6 L149.3 1216.3 L374.0 1216.3 L380.2 1217.9 L530.0 1217.9 L639.9 1218.1 L646.8 1216.3 L809.4 1216.3 L816.3 1217.4 L870.8 1217.4 L877.7 1218.6 L970.0 1218.6 L1129.8 1218.6 L1136.7 1216.3 L1367.9 1216.3 L1375.2 1218.6 L1410.0 1218.6 L1627.3 1218.6 L1634.2 1216.3 L1832.0 1216.3 L1838.9 1218.6 L1845.4 1218.6 L1845.4 1218.6"/>
<path stroke="#40c0a0" d="M95.0 1217.3 L142.9 1217.3 L149.3 1215.0 L374.0 1215.0 L380.2 1216.6 L530.0 1216.6 L639.9 1216.8 L646.8 1215.0 L809.4 1215.0 L816.3 1216.1 L870.8 1216.1 L877.7 1217.3 L970.0 1217.3 L1129.8 1217.3 L1136.7 1215.0 L1367.9 1215.0 L1375.2 1217.3 L1410.0 1217.3 L1627.3 1217.3 L1634.2 1215.0 L1832.0 1215.0 L1838.9 1217.3 L1845.4 1217.3 L1845.4 1217.3"/>
<path stroke="#0000e0" d="M95.0 1261.5 L107.9 1261.5 L114.8 1256.4 L142.9 1256.4 L149.3 1261.0 L169.3 1261.0 L176.2 1263.3 L259.0 1263.3 L265.3 1261.5 L312.6 1261.5 L319.5 1262.8 L349.9 1262.8 L400.9 1262.8 L435.0 1262.8 L441.9 1261.5 L462.6 1261.5 L469.5 1263.8 L530.0 1263.8 L578.3 1263.8 L585.2 1252.3 L605.4 1252.3 L612.3 1258.7 L639.9 1258.7 L646.8 1266.1 L667.5 1266.1 L673.7 1252.3 L694.4 1252.3 L700.7 1256.4 L755.4 1256.4 L762.3 1261.0 L843.9 1261.0 L850.1 1258.7 L870.8 1258.7 L877.7 1263.8 L970.0 1263.8 L1075.8 1263.8 L1082.2 1258.7 L1102.9 1258.7 L1109.1 1263.8 L1280.0 1263.8 L1286.9 1261.0 L1334.5 1261.0 L1341.4 1258.7 L1367.9 1258.7 L1375.2 1256.4 L1395.5 1256.4 L1402.4 1258.7 L1410.0 1258.7 L1457.1 1258.7 L1464.0 1258.7 L1484.7 1258.7 L1491.6 1263.8 L1600.9 1263.8 L1607.3 1258.7 L1627.3 1258.7 L1634.2 1261.0 L1661.8 1261.0 L1668.0 1258.7 L1715.9 1258.7 L1722.8 1263.8 L1743.5 1263.8 L1750.4 1261.0 L1778.0 1261.0 L1784.4 1266.1 L1845.4 1266.1 L1845.4 1266.1"/>
<path stroke="#c0e0c0" d="M95.0 1253.6 L109.5 1253.6 L115.3 1258.7 L142.9 1258.7 L149.3 1261.0 L169.3 1261.0 L176.2 1263.8 L259.0 1263.8 L265.3 1254.6 L435.0 1254.6 L441.9 1250.6 L490.2 1250.6 L496.6 1254.6 L530.0 1254.6 L551.2 1256.4 L557.6 1258.7 L605.4 1258.7 L612.3 1256.4 L639.9 1256.4 L646.8 1254.6 L667.5 1254.6 L673.7 1256.4 L694.4 1256.4 L700.7 1258.7 L783.0 1258.7 L789.4 1261.0 L809.4 1261.0 L816.3 1258.7 L843.9 1258.7 L850.1 1256.4 L959.6 1258.7 L965.8 1256.4 L970.0 1256.4 L987.2 1256.4 L994.1 1254.6 L1014.2 1254.6 L1021.1 1252.3 L1075.8 1252.3 L1082.2 1250.0 L1102.9 1250.0 L1109.1 1254.6 L1218.4 1254.6 L1225.3 1258.7 L1280.0 1258.7 L1286.9 1256.4 L1410.0 1256.4 L1457.1 1256.4 L1464.0 1252.3 L1484.7 1252.3 L1491.6 1254.6 L1512.3 1254.6 L1518.6 1252.3 L1538.8 1252.3 L1545.7 1254.6 L1661.8 1254.6 L1668.0 1252.3 L1715.9 1252.3 L1722.8 1256.4 L1778.0 1256.4 L1784.4 1258.7 L1832.0 1258.7 L1838.9 1254.6 L1845.4 1254.6 L1845.4 1254.6"/>
<path stroke="#00a0c0" d="M95.0 1250.0 L109.5 1250.0 L115.3 1252.3 L142.9 1252.3 L149.3 1253.6 L169.3 1253.6 L176.2 1247.7 L196.9 1247.7 L203.8 1250.6 L230.8 1250.6 L237.2 1252.3 L259.0 1252.3 L265.3 1254.6 L285.5 1254.6 L292.4 1258.2 L346.4 1258.2 L353.3 1262.8 L400.9 1262.8 L407.8 1258.7 L435.0 1256.4 L441.9 1254.6 L462.6 1254.6 L469.5 1250.0 L517.3 1250.0 L523.5 1245.4 L530.0 1245.4 L578.3 1245.4 L585.2 1247.7 L605.4 1247.7 L612.3 1250.0 L639.9 1250.0 L646.8 1251.8 L667.5 1250.0 L673.7 1252.3 L694.4 1252.3 L700.7 1254.6 L783.0 1254.6 L789.4 1256.4 L809.4 1256.4 L816.3 1254.6 L843.9 1254.6 L850.1 1252.3 L959.6 1252.3 L965.8 1254.6 L970.0 1254.6 L1014.2 1254.6 L1021.1 1258.7 L1075.8 1258.7 L1082.2 1256.4 L1102.9 1256.4 L1109.1 1252.3 L1129.8 1252.3 L1136.7 1254.6 L1191.9 1254.6 L1198.8 1252.3 L1218.4 1252.3 L1225.3 1254.6 L1252.9 1254.6 L1259.3 1252.3 L1280.0 1252.3 L1286.9 1254.6 L1307.6 1254.6 L1314.5 1252.3 L1367.9 1252.3 L1375.2 1254.6 L1410.0 1254.6 L1512.3 1254.6 L1518.6 1256.4 L1538.8 1256.4 L1545.7 1254.6 L1600.9 1254.6 L1607.3 1252.3 L1715.9 1252.3 L1722.8 1254.6 L1778.0 1254.6 L1784.4 1252.3 L1804.4 1252.3 L1811.3 1254.6 L1832.0 1254.6 L1838.9 1261.0 L1845.4 1261.0 L1845.4 1261.0"/>
<path stroke="#80a0e0" d="M95.0 1252.3 L109.5 1252.3 L115.3 1247.7 L142.9 1247.7 L149.3 1252.3 L169.3 1252.3 L176.2 1256.9 L196.9 1256.9 L203.8 1254.6 L230.8 1254.6 L237.2 1252.3 L259.0 1252.3 L265.3 1250.0 L285.5 1250.0 L292.4 1245.4 L312.6 1245.4 L319.5 1247.7 L374.0 1247.7 L380.2 1256.9 L400.9 1256.9 L407.8 1258.7 L435.0 1258.7 L441.9 1256.9 L462.6 1256.9 L469.5 1252.3 L517.3 1252.3 L523.5 1253.6 L530.0 1253.6 L551.2 1253.6 L557.6 1256.4 L578.3 1256.4 L585.2 1254.6 L605.4 1254.6 L612.3 1252.3 L639.9 1252.3 L646.8 1247.7 L694.4 1247.7 L700.7 1250.0 L721.4 1250.0 L728.3 1252.3 L783.0 1252.3 L789.4 1247.7 L843.9 1247.7 L850.1 1250.0 L925.6 1250.0 L932.0 1248.3 L959.6 1248.3 L965.8 1250.6 L970.0 1251.8 L987.2 1251.8 L994.1 1253.6 L1014.2 1253.6 L1021.1 1256.4 L1048.2 1256.4 L1055.1 1254.6 L1075.8 1254.6 L1082.2 1256.4 L1102.9 1256.4 L1109.1 1258.7 L1129.8 1258.7 L1136.7 1256.4 L1164.3 1256.4 L1171.2 1261.0 L1191.9 1261.0 L1198.8 1258.7 L1280.0 1258.7 L1286.9 1254.6 L1367.9 1254.6 L1375.2 1246.0 L1395.5 1246.0 L1402.4 1248.3 L1410.0 1248.3 L1457.1 1248.3 L1464.0 1246.0 L1484.7 1246.0 L1491.6 1248.3 L1538.8 1248.3 L1545.7 1250.6 L1600.9 1250.6 L1607.3 1256.4 L1627.3 1256.4 L1634.2 1258.7 L1661.8 1258.7 L1668.0 1261.0 L1688.7 1261.0 L1695.6 1258.7 L1715.9 1258.7 L1722.8 1261.0 L1743.5 1261.0 L1750.4 1258.7 L1778.0 1258.7 L1784.4 1256.4 L1832.0 1256.4 L1838.9 1251.8 L1845.4 1251.8 L1845.4 1251.8"/>
<path stroke="#c0c0a0" d="M95.0 1266.7 L349.9 1266.7 L353.3 1258.7 L400.9 1258.7 L407.8 1261.0 L462.6 1261.0 L469.5 1258.7 L530.0 1258.7 L551.2 1261.0 L605.4 1261.0 L612.3 1263.8 L639.9 1263.8 L646.8 1258.7 L667.5 1258.7 L673.7 1261.0 L783.0 1261.0 L789.4 1263.8 L970.0 1263.8 L1075.8 1263.8 L1082.2 1262.4 L1218.4 1262.4 L1225.3 1263.8 L1307.6 1263.8 L1314.5 1262.4 L1410.0 1262.4 L1627.3 1262.4 L1634.2 1263.8 L1688.7 1263.8 L1695.6 1262.4 L1778.0 1262.4 L1784.4 1263.8 L1845.4 1263.8 L1845.4 1263.8"/>
<path stroke="#c08060" d="M95.0 1267.9 L400.9 1267.9 L407.8 1261.0 L462.6 1261.0 L469.5 1262.4 L530.0 1262.4 L639.9 1262.4 L646.8 1258.7 L694.4 1258.7 L700.7 1263.8 L870.8 1263.8 L877.7 1261.0 L970.0 1261.0 L1075.8 1261.0 L1082.2 1263.8 L1129.8 1263.8 L1136.7 1264.7 L1191.9 1264.7 L1198.8 1258.7 L1218.4 1258.7 L1225.3 1263.8 L1307.6 1263.8 L1314.5 1258.7 L1334.5 1258.7 L1341.4 1256.4 L1367.9 1256.4 L1375.2 1263.8 L1410.0 1263.8 L1512.3 1263.8 L1518.6 1261.0 L1538.8 1261.0 L1545.7 1263.8 L1573.3 1263.8 L1579.7 1264.7 L1600.9 1264.7 L1607.3 1266.1 L1688.7 1266.1 L1695.6 1262.4 L1715.9 1262.4 L1722.8 1266.1 L1845.4 1266.1 L1845.4 1266.1"/>
<path stroke="#806020" d="M95.0 1265.6 L142.9 1265.6 L149.3 1263.8 L169.3 1263.8 L176.2 1261.5 L230.8 1261.5 L237.2 1259.2 L259.0 1259.2 L265.3 1261.5 L312.6 1261.5 L319.5 1265.6 L530.0 1265.6 L578.3 1265.6 L585.2 1263.8 L605.4 1263.8 L612.3 1261.0 L667.5 1261.0 L673.7 1265.6 L809.4 1265.6 L816.3 1261.0 L843.9 1261.0 L850.1 1263.8 L870.8 1263.8 L877.7 1265.6 L970.0 1265.6 L987.2 1265.6 L994.1 1263.8 L1048.2 1263.8 L1055.1 1265.6 L1075.8 1265.6 L1082.2 1263.8 L1164.3 1263.8 L1171.2 1266.1 L1252.9 1266.1 L1259.3 1267.9 L1334.5 1267.9 L1341.4 1263.8 L1395.5 1263.8 L1402.4 1261.0 L1410.0 1261.0 L1457.1 1261.0 L1464.0 1263.8 L1512.3 1263.8 L1518.6 1262.1 L1573.3 1262.1 L1579.7 1266.1 L1600.9 1266.1 L1607.3 1263.8 L1778.0 1263.8 L1784.4 1266.1 L1832.0 1266.1 L1838.9 1263.8 L1845.4 1263.8 L1845.4 1263.8"/>
<path stroke="#806060" d="M95.0 1267.9 L109.5 1267.9 L115.3 1269.3 L196.3 1269.3 L203.2 1267.4 L285.5 1267.4 L292.4 1269.3 L530.0 1269.3 L970.0 1269.3 L1075.8 1269.3 L1082.2 1267.4 L1129.8 1267.4 L1136.7 1269.3 L1252.9 1269.3 L1259.3 1266.1 L1280.0 1266.1 L1286.9 1269.3 L1410.0 1269.3 L1512.3 1269.3 L1518.6 1267.4 L1573.3 1267.4 L1579.7 1269.3 L1743.5 1269.3 L1750.4 1267.4 L1778.0 1267.4 L1784.4 1269.3 L1845.4 1269.3 L1845.4 1269.3"/>
<path stroke="#802020" d="M1594.0 1266.1 L1600.9 1266.1 L1607.3 1263.8 L1627.3 1263.8 L1634.2 1250.6 L1661.8 1250.6 L1668.0 1246.0 L1688.7 1246.0 L1695.6 1243.7 L1832.0 1243.7 L1838.9 1248.3 L1845.4 1248.3 L1845.4 1248.3"/>
<path stroke="#806060" d="M95.0 1270.6 L1845.4 1270.6"/>
<path stroke="#80e060" d="M95.0 1269.7 L109.5 1269.7 L115.3 1272.0 L196.9 1272.0 L203.8 1269.7 L230.8 1269.7 L237.2 1267.9 L285.5 1267.9 L292.4 1270.2 L374.0 1270.2 L380.2 1267.9 L462.6 1267.9 L469.5 1270.2 L490.2 1270.2 L496.6 1272.0 L530.0 1272.0 L551.2 1272.0 L557.6 1270.2 L639.9 1270.2 L646.8 1272.0 L667.5 1272.0 L673.7 1273.0 L755.4 1273.0 L762.3 1270.2 L809.4 1270.2 L816.3 1271.6 L898.0 1271.6 L904.9 1273.0 L959.6 1273.0 L965.8 1270.2 L970.0 1270.2 L1014.2 1270.2 L1021.1 1272.0 L1048.2 1272.0 L1055.1 1270.2 L1102.9 1270.2 L1109.1 1268.8 L1218.4 1268.8 L1225.3 1272.0 L1252.9 1272.0 L1259.3 1270.2 L1307.6 1270.2 L1314.5 1273.0 L1334.5 1273.0 L1341.4 1271.1 L1367.9 1271.1 L1375.2 1272.0 L1410.0 1272.0 L1484.7 1272.0 L1491.6 1270.2 L1627.3 1270.2 L1634.2 1268.8 L1743.5 1268.8 L1750.4 1272.0 L1778.0 1272.0 L1784.4 1270.2 L1804.4 1270.2 L1811.3 1268.8 L1845.4 1268.8 L1845.4 1268.8"/>
</g></svg>
<div class="a" style="left:0;top:0;width:1913px;height:1536px;will-change:transform">
<div class="t " style="right:1827.20px;top:438.72px;font-size:19.00px;color:#545454;">1.40</div>
<div class="t " style="right:1827.20px;top:556.82px;font-size:19.00px;color:#545454;">1.20</div>
<div class="t " style="right:1827.20px;top:674.72px;font-size:19.00px;color:#545454;">1.00</div>
<div class="t " style="right:1827.20px;top:792.82px;font-size:19.00px;color:#545454;">0.80</div>
<div class="t " style="right:1827.20px;top:910.82px;font-size:19.00px;color:#545454;">0.60</div>
<div class="t " style="right:1827.20px;top:1028.02px;font-size:19.00px;color:#545454;">0.40</div>
<div class="t " style="right:1827.20px;top:1145.62px;font-size:19.00px;color:#545454;">0.20</div>
<div class="t " style="right:1827.20px;top:1262.72px;font-size:19.00px;color:#545454;">0.00</div>
<div class="t " style="left:190.60px;transform:translateX(-50%);top:1287.42px;font-size:19.00px;color:#545454;">17:08</div>
<div class="t " style="left:307.23px;transform:translateX(-50%);top:1287.42px;font-size:19.00px;color:#545454;">17:10</div>
<div class="t " style="left:423.86px;transform:translateX(-50%);top:1287.42px;font-size:19.00px;color:#545454;">17:12</div>
<div class="t " style="left:540.49px;transform:translateX(-50%);top:1287.42px;font-size:19.00px;color:#545454;">17:14</div>
<div class="t " style="left:657.12px;transform:translateX(-50%);top:1287.42px;font-size:19.00px;color:#545454;">17:16</div>
<div class="t " style="left:773.75px;transform:translateX(-50%);top:1287.42px;font-size:19.00px;color:#545454;">17:18</div>
<div class="t " style="left:890.38px;transform:translateX(-50%);top:1287.42px;font-size:19.00px;color:#545454;">17:20</div>
<div class="t " style="left:1007.01px;transform:translateX(-50%);top:1287.42px;font-size:19.00px;color:#545454;">17:22</div>
<div class="t " style="left:1123.64px;transform:translateX(-50%);top:1287.42px;font-size:19.00px;color:#545454;">17:24</div>
<div class="t " style="left:1240.27px;transform:translateX(-50%);top:1287.42px;font-size:19.00px;color:#545454;">17:26</div>
<div class="t " style="left:1356.90px;transform:translateX(-50%);top:1287.42px;font-size:19.00px;color:#545454;">17:28</div>
<div class="t " style="left:1473.53px;transform:translateX(-50%);top:1287.42px;font-size:19.00px;color:#545454;">17:30</div>
<div class="t " style="left:1590.16px;transform:translateX(-50%);top:1287.42px;font-size:19.00px;color:#545454;">17:32</div>
<div class="t " style="left:1706.79px;transform:translateX(-50%);top:1287.42px;font-size:19.00px;color:#545454;">17:34</div>
<div class="t " style="left:1823.42px;transform:translateX(-50%);top:1287.42px;font-size:19.00px;color:#545454;">17:36</div>
</div>
<div class="a" style="left:155.00px;top:1366.10px;width:19.00px;height:18.20px;border:2px solid #ccc;background:#fff"></div>
<div class="a" style="left:158.10px;top:1369.00px;width:13.20px;height:12.50px;background:#008000"></div>
<div class="t " style="left:186.50px;top:1364.62px;font-size:21.12px;color:#212529;">{<b>resource</b>="alertmanagerconfigs", <b>verb</b>="LIST"}</div>
<div class="a" style="left:155.00px;top:1402.05px;width:19.00px;height:18.20px;border:2px solid #ccc;background:#fff"></div>
<div class="a" style="left:158.10px;top:1404.95px;width:13.20px;height:12.50px;background:#008080"></div>
<div class="t " style="left:186.50px;top:1400.57px;font-size:21.12px;color:#212529;">{<b>resource</b>="alertmanagerconfigs", <b>verb</b>="WATCH"}</div>
<div class="a" style="left:155.00px;top:1438.00px;width:19.00px;height:18.20px;border:2px solid #ccc;background:#fff"></div>
<div class="a" style="left:158.10px;top:1440.90px;width:13.20px;height:12.50px;background:#800000"></div>
<div class="t " style="left:186.50px;top:1436.52px;font-size:21.12px;color:#212529;">{<b>resource</b>="alertmanagers", <b>verb</b>="GET"}</div>
<div class="a" style="left:155.00px;top:1473.95px;width:19.00px;height:18.20px;border:2px solid #ccc;background:#fff"></div>
<div class="a" style="left:158.10px;top:1476.85px;width:13.20px;height:12.50px;background:#800080"></div>
<div class="t " style="left:186.50px;top:1472.47px;font-size:21.12px;color:#212529;">{<b>resource</b>="alertmanagers", <b>verb</b>="LIST"}</div>
<div class="a" style="left:155.00px;top:1509.90px;width:19.00px;height:18.20px;border:2px solid #ccc;background:#fff"></div>
<div class="a" style="left:158.10px;top:1512.80px;width:13.20px;height:12.50px;background:#808000"></div>
<div class="t " style="left:186.50px;top:1508.42px;font-size:21.12px;color:#212529;">{<b>resource</b>="alertmanagers", <b>verb</b>="POST"}</div>
</body></html>
